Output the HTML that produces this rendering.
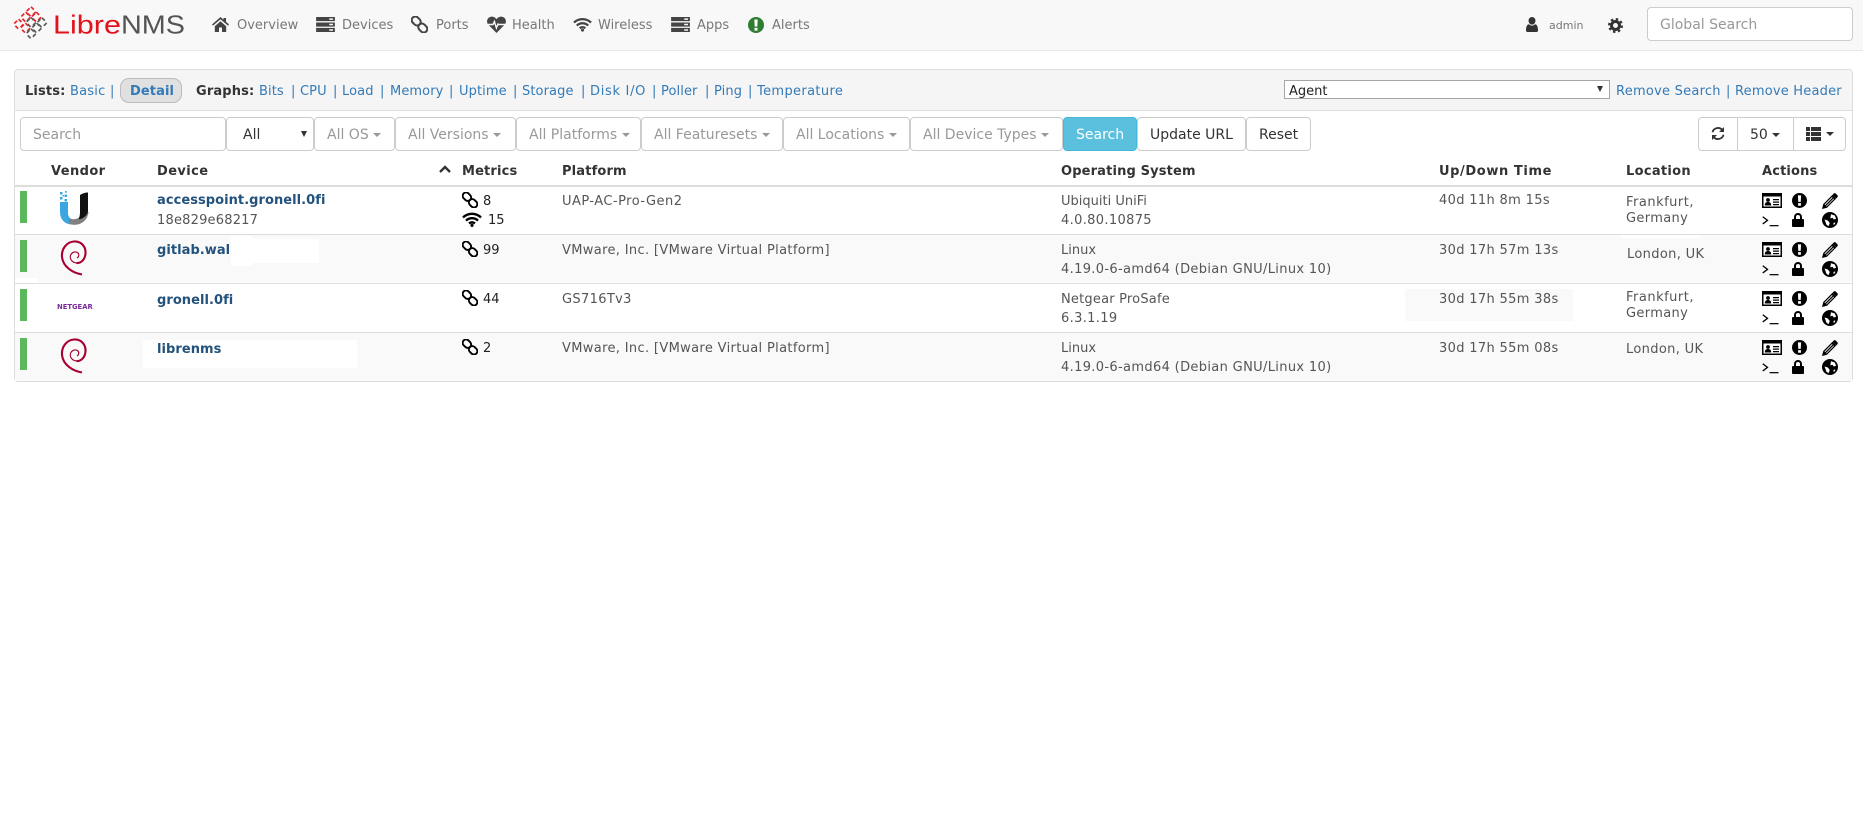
<!DOCTYPE html>
<html lang="en"><head><meta charset="utf-8"><title>LibreNMS Devices</title>
<style>
html,body{margin:0;padding:0;background:#fff}
body{width:1863px;height:821px;position:relative;overflow:hidden;font-family:"DejaVu Sans","Liberation Sans",sans-serif;font-size:13px;color:#333}
.a{position:absolute;white-space:nowrap;line-height:20px;height:20px}
.b{position:absolute;box-sizing:border-box}
a,.l{color:#337ab7;text-decoration:none;letter-spacing:.1px}
.n{color:#777;font-size:13px}
.th{font-weight:bold;color:#333;font-size:13px;letter-spacing:.15px}
.td{color:#555;font-size:13px;letter-spacing:.34px}
.dv{color:#23527c;font-weight:bold;font-size:13px;letter-spacing:.05px}
.btn{position:absolute;box-sizing:border-box;top:117px;height:34px;border:1px solid #ccc;border-radius:4px;background:#fff;line-height:35px;font-size:14px;color:#999;padding-left:12px;white-space:nowrap;overflow:hidden}
.btn i{display:inline-block;width:0;height:0;border-top:4px solid #999;border-left:4px solid transparent;border-right:4px solid transparent;vertical-align:middle;margin-left:0}
.dk{color:#333}.dk i{border-top-color:#333}
svg{position:absolute;overflow:visible}
.bar{position:absolute;left:20px;width:7px;height:32px;background:#5cb85c}
</style></head><body>
<svg width="0" height="0" style="position:absolute"><defs>
<symbol id="link" viewBox="0 0 16 16"><g fill="none" stroke="currentColor" stroke-width="1.900"><rect x="0.300" y="1.300" width="9.200" height="6.800" rx="3.400" transform="rotate(45 4.900 4.700)"/><rect x="6.500" y="7.900" width="9.200" height="6.800" rx="3.400" transform="rotate(45 11.100 11.300)"/></g></symbol>
<symbol id="wifi" viewBox="0 0 20 15"><g fill="none" stroke="currentColor" stroke-width="2.400"><path d="M1 5.500C6 .6 14 .6 19 5.500"/><path d="M4 8.600C7.400 5.400 12.600 5.400 16 8.600"/><path d="M7 11.400C8.800 10 11.200 10 13 11.400"/></g><circle cx="10" cy="13.400" r="1.600" fill="currentColor"/></symbol>
<symbol id="srv" viewBox="0 0 20 16"><path fill="currentColor" d="M0 0h20v4.400H0zM0 5.800h20v4.400H0zM0 11.600h20V16H0z"/><path fill="#f8f8f8" d="M14 1.400h4v1.600h-4zM14 7.200h4v1.600h-4zM14 13h4v1.600h-4z"/></symbol>
<symbol id="excl" viewBox="0 0 16 16"><circle cx="8" cy="8" r="8" fill="currentColor"/><path fill="#fff" d="M6.300 2.500h3.400l-.4 7H6.700zM6.500 10.800h3v2.800h-3z"/></symbol>
<symbol id="card" viewBox="0 0 20 15"><path fill="#000" d="M0 0h20v15H0z"/><path fill="#fff" d="M1.500 3.500h17v10h-17z"/><circle cx="6" cy="7" r="1.900" fill="#000"/><path fill="#000" d="M2.800 12.500c0-2.500 1-3.500 3.200-3.500s3.200 1 3.200 3.500zM11 6h6v1.300h-6zM11 8.500h6v1.300h-6zM11 11h6v1.300h-6z"/></symbol>
<symbol id="pen" viewBox="0 0 16 16"><path fill="#000" d="M0 16l1.300-5L10.500 1.800l3.700 3.700L5 14.700zM11.500.8c.8-.8 1.700-.8 2.400-.1l1.400 1.400c.7.7.7 1.600-.1 2.400l-.9.9-3.700-3.700z"/><path fill="#fff" d="M2.500 11.500l7.500-7.500.6.6-7.500 7.500zM4 13l7.500-7.500.5.5-7.500 7.500z"/></symbol>
<symbol id="lock" viewBox="0 0 12 14"><path fill="none" stroke="#000" stroke-width="2" d="M3 6.500V4a3 3 0 0 1 6 0v2.500"/><rect x="0" y="6" width="12" height="8" rx="1" fill="#000"/></symbol>
<symbol id="globe" viewBox="0 0 16 16"><circle cx="8" cy="8" r="8" fill="#000"/><path fill="#fff" d="M9 2.200l3.800 1.300 1.300 3.300-2.300.7-1.300-1.700-2.200.6zM2.500 7.500l3.300 1 2 2.500-1.300 3.300-2.200-1.800-.8-2.500zM12 10.500l1.500.4-1.400 2-.9-.8z"/></symbol>
<symbol id="term" viewBox="0 0 18 12"><path fill="none" stroke="#000" stroke-width="1.400" d="M.8 1.500l5 3.800-5 3.800"/><path fill="#000" d="M8 10.300h9.500v1.300H8z"/></symbol>
<symbol id="deb" viewBox="0 0 28 36"><g fill="none" stroke="#a80030"><path stroke-width="2.100" d="M22 34.500C13 33 3 27 2 17 1.300 9 6.500 2 14 1.500 21.500 1 26 7 25.500 13.500 25 19.500 21 23.500 16.500 23"/><path stroke-width="1.100" d="M16.500 23C12 22.500 9.500 19 10.500 15.500 11.500 12.500 15 11 17.500 12.500 19.500 14 19 17 17 18"/></g></symbol>
</defs></svg>

<!-- navbar -->
<div class="b" style="left:0;top:0;width:1863px;height:51px;background:#f8f8f8;border-bottom:1px solid #e7e7e7"></div>

<!-- logo -->
<svg style="left:14px;top:8px" width="34" height="33" viewBox="0 0 34 33">
<g transform="rotate(45 17 16.500)" fill="none" stroke-width="1.700">
<g stroke="#e6242c" stroke-dasharray="4 3.300"><rect x="4.500" y="4" width="7" height="7"/><rect x="12" y="4" width="7" height="7"/><rect x="4.500" y="11.500" width="7" height="7"/><rect x="4.500" y="21.500" width="7" height="7"/></g>
<g stroke="#5a5a5a" stroke-dasharray="4 3.300"><rect x="20" y="11.500" width="7" height="7"/><rect x="12" y="11.500" width="7" height="7"/><rect x="20" y="4" width="7" height="7"/></g>
<g stroke="#e6242c" stroke-dasharray="4 3.300"><rect x="12" y="19.500" width="7" height="7"/></g>
<g stroke="#5a5a5a" stroke-dasharray="4 3.300"><rect x="20" y="19.500" width="7" height="7"/></g>
</g></svg>
<svg style="left:53px;top:8px" width="134" height="34"><text x="0" y="25.500" font-family="Liberation Sans" font-size="26" fill="#e2131c" textLength="68" lengthAdjust="spacingAndGlyphs">Libre</text><text x="68" y="25.500" font-family="Liberation Sans" font-size="26" fill="#555" textLength="64" lengthAdjust="spacingAndGlyphs">NMS</text></svg>

<!-- nav -->
<svg style="left:212px;top:17px;color:#444" width="17" height="15" viewBox="0 0 17 15"><path fill="currentColor" d="M8.500 0l3 2.600V1h2.500v3.800L17 7.500l-1 1.100-7.500-6.400L1 8.600 0 7.500zM2.800 9.200l5.700-4.900 5.700 4.900V15H10v-4.500H7V15H2.800z"/></svg>
<div class="a n" style="left:237px;top:16px">Overview</div>
<svg style="left:316px;top:17px;color:#444" width="19" height="15"><use href="#srv"/></svg>
<div class="a n" style="left:342px;top:16px">Devices</div>
<svg style="left:411px;top:16px;color:#444" width="17" height="17"><use href="#link"/></svg>
<div class="a n" style="left:436px;top:16px">Ports</div>
<svg style="left:487px;top:16px;color:#444" width="19" height="17" viewBox="0 0 19 17"><path fill="#444" d="M9.500 17L1 8.400C-1 5.500.2 1 4.500.6c2-.2 4 1 5 2.600C10.500 1.600 12.500.4 14.500.6 18.800 1 20 5.500 18 8.400z"/><path fill="none" stroke="#f8f8f8" stroke-width="1.400" d="M0 8.500h6l1.400-3 2 6.500 1.600-4 .8.500H19"/></svg>
<div class="a n" style="left:512px;top:16px">Health</div>
<svg style="left:573px;top:17px;color:#444" width="19" height="15"><use href="#wifi"/></svg>
<div class="a n" style="left:598px;top:16px">Wireless</div>
<svg style="left:671px;top:17px;color:#444" width="19" height="15"><use href="#srv"/></svg>
<div class="a n" style="left:697px;top:16px">Apps</div>
<svg style="left:748px;top:17px;color:#2e7d32" width="16" height="16"><use href="#excl"/></svg>
<div class="a n" style="left:772px;top:16px">Alerts</div>

<svg style="left:1526px;top:17px" width="12" height="15" viewBox="0 0 12 15"><ellipse cx="6" cy="3.800" rx="3.500" ry="3.800" fill="#333"/><path fill="#333" d="M0 13.500C0 9.500 1.200 7.300 3 7.300c1 .9 2 1.300 3 1.300s2-.4 3-1.300c1.800 0 3 2.200 3 6.200 0 1-.7 1.500-1.500 1.500h-9C.7 15 0 14.500 0 13.500z"/></svg>
<div class="a n" style="left:1549px;top:16px;font-size:11px">admin</div>
<svg style="left:1608px;top:18px" width="15" height="15" viewBox="0 0 15 15"><circle cx="7.500" cy="7.500" r="4" fill="none" stroke="#333" stroke-width="3"/><circle cx="7.500" cy="7.500" r="6.400" fill="none" stroke="#333" stroke-width="2.200" stroke-dasharray="2.500 2.530"/></svg>
<div class="b" style="left:1647px;top:7px;width:206px;height:34px;background:#fff;border:1px solid #ccc;border-radius:4px"></div>
<div class="a" style="left:1660px;top:15px;font-size:14px;color:#999">Global Search</div>

<!-- panel -->
<div class="b" style="left:14px;top:69px;width:1839px;height:313px;border:1px solid #ddd;border-radius:4px;background:#fff"></div>
<div class="b" style="left:15px;top:70px;width:1837px;height:41px;background:#f5f5f5;border-bottom:1px solid #ddd;border-radius:3px 3px 0 0"></div>

<div class="a th" style="left:25px;top:82px">Lists:</div>
<a class="a" style="left:70px;top:82px;letter-spacing:.2px">Basic</a><div class="a" style="left:110px;top:82px;color:#337ab7">|</div>
<div class="b" style="left:120px;top:78px;width:62px;height:25px;background:#e0e0e0;border:1px solid #bbb;border-radius:9px"></div>
<a class="a" style="left:130px;top:82px;font-weight:bold">Detail</a>
<div class="a th" style="left:196px;top:82px">Graphs:</div>
<a class="a" style="left:259px;top:82px">Bits</a><div class="a" style="left:291px;top:82px;color:#337ab7">|</div>
<a class="a" style="left:300px;top:82px">CPU</a><div class="a" style="left:333px;top:82px;color:#337ab7">|</div>
<a class="a" style="left:342px;top:82px">Load</a><div class="a" style="left:380px;top:82px;color:#337ab7">|</div>
<a class="a" style="left:390px;top:82px">Memory</a><div class="a" style="left:449px;top:82px;color:#337ab7">|</div>
<a class="a" style="left:459px;top:82px">Uptime</a><div class="a" style="left:513px;top:82px;color:#337ab7">|</div>
<a class="a" style="left:522px;top:82px">Storage</a><div class="a" style="left:581px;top:82px;color:#337ab7">|</div>
<a class="a" style="left:590px;top:82px;letter-spacing:.7px">Disk I/O</a><div class="a" style="left:652px;top:82px;color:#337ab7">|</div>
<a class="a" style="left:661px;top:82px">Poller</a><div class="a" style="left:705px;top:82px;color:#337ab7">|</div>
<a class="a" style="left:714px;top:82px">Ping</a><div class="a" style="left:748px;top:82px;color:#337ab7">|</div>
<a class="a" style="left:757px;top:82px;letter-spacing:.35px">Temperature</a>

<div class="b" style="left:1284px;top:80px;width:326px;height:19px;background:#fff;border:1px solid #a6a6a6"></div>
<div class="a" style="left:1289px;top:82px;color:#222">Agent</div>
<div class="b" style="left:1597px;top:86px;width:0;height:0;border-top:6px solid #333;border-left:3px solid transparent;border-right:3px solid transparent"></div>
<a class="a" style="left:1616px;top:82px;letter-spacing:.25px">Remove Search</a><div class="a" style="left:1726px;top:82px;color:#337ab7">|</div>
<a class="a" style="left:1735px;top:82px;letter-spacing:.2px">Remove Header</a>

<!-- search row -->
<div class="btn" style="left:20px;width:206px;color:#999;line-height:35px;padding-left:12px">Search</div>
<div class="btn dk" style="left:226px;width:88px;color:#333;line-height:35px;padding-left:16px">All</div>
<div class="b" style="left:301px;top:131px;width:0;height:0;border-top:6px solid #333;border-left:3px solid transparent;border-right:3px solid transparent"></div>
<div class="btn" style="left:314px;width:81px">All OS <i></i></div>
<div class="btn" style="left:395px;width:121px">All Versions <i></i></div>
<div class="btn" style="left:516px;width:125px">All Platforms <i></i></div>
<div class="btn" style="left:641px;width:142px">All Featuresets <i></i></div>
<div class="btn" style="left:783px;width:127px">All Locations <i></i></div>
<div class="btn" style="left:910px;width:153px">All Device Types <i></i></div>
<div class="btn" style="left:1063px;width:74px;background:#5bc0de;border-color:#46b8da;color:#fff">Search</div>
<div class="btn dk" style="left:1137px;width:109px">Update URL</div>
<div class="btn dk" style="left:1246px;width:65px">Reset</div>

<div class="btn" style="left:1698px;width:40px;border-radius:4px 0 0 4px"></div>
<svg style="left:1711px;top:126px" width="14" height="15" viewBox="0 0 14 15"><g fill="none" stroke="#333" stroke-width="1.800"><path d="M1.500 6.200A5.700 5.700 0 0 1 11.400 4"/><path d="M12.500 8.800A5.700 5.700 0 0 1 2.600 11"/></g><path fill="#333" d="M13 1v5H8zM1 14V9h5z"/></svg>
<div class="btn dk" style="left:1737px;width:57px;border-radius:0">50 <i></i></div>
<div class="btn dk" style="left:1793px;width:53px;border-radius:0 4px 4px 0"></div>
<svg style="left:1806px;top:127px" width="15" height="14" viewBox="0 0 15 14"><path fill="#333" d="M0 0h4v4H0zM5 0h10v4H5zM0 5h4v4H0zM5 5h10v4H5zM0 10h4v4H0zM5 10h10v4H5z"/></svg>
<div class="b" style="left:1826px;top:132px;width:0;height:0;border-top:4px solid #333;border-left:4px solid transparent;border-right:4px solid transparent"></div>

<!-- table head -->
<div class="a th" style="left:51px;top:162px;letter-spacing:.4px">Vendor</div>
<div class="a th" style="left:157px;top:162px;letter-spacing:.4px">Device</div>
<svg style="left:439px;top:165px" width="12" height="8" viewBox="0 0 12 8"><path fill="none" stroke="#333" stroke-width="2.400" d="M1 7l5-5 5 5"/></svg>
<div class="a th" style="left:462px;top:162px">Metrics</div>
<div class="a th" style="left:562px;top:162px">Platform</div>
<div class="a th" style="left:1061px;top:162px">Operating System</div>
<div class="a th" style="left:1439px;top:162px;letter-spacing:.6px">Up/Down Time</div>
<div class="a th" style="left:1626px;top:162px;letter-spacing:.3px">Location</div>
<div class="a th" style="left:1762px;top:162px">Actions</div>

<!-- rows -->
<div class="b" style="left:15px;top:185px;width:1837px;height:2px;background:#ddd"></div>
<div class="b" style="left:15px;top:235px;width:1837px;height:47px;background:#f9f9f9"></div>
<div class="b" style="left:15px;top:234px;width:1837px;height:1px;background:#ddd"></div>
<div class="b" style="left:15px;top:283px;width:1837px;height:1px;background:#ddd"></div>
<div class="b" style="left:15px;top:333px;width:1837px;height:48px;background:#f9f9f9"></div>
<div class="b" style="left:15px;top:332px;width:1837px;height:1px;background:#ddd"></div>

<!-- patches -->
<div class="b" style="left:231px;top:239px;width:88px;height:24px;background:#fff"></div>
<div class="b" style="left:231px;top:236px;width:21px;height:30px;background:#fff"></div>
<div class="b" style="left:15px;top:278px;width:23px;height:50px;background:#fff"></div>
<div class="b" style="left:143px;top:340px;width:214px;height:28px;background:#fff"></div>
<div class="b" style="left:1621px;top:235px;width:79px;height:3px;background:#fff"></div>
<div class="b" style="left:1405px;top:289px;width:168px;height:32px;background:#f9f9f9"></div>
<div class="b" style="left:15px;top:283px;width:23px;height:1px;background:#ddd"></div>

<div class="bar" style="top:191px"></div><div class="bar" style="top:240px"></div><div class="bar" style="top:289px"></div><div class="bar" style="top:338px"></div>

<!-- vendor logos -->
<svg style="left:58px;top:191px" width="32" height="34" viewBox="0 0 32 34">
<path fill="#3aa7e0" d="M2 11h8v11c0 3 1.500 5 3.500 6-2 1.500-2.500 3.500-1 5.500C6 32.500 2 28 2 21z"/>
<path fill="#808080" d="M11 27.500c3 1 7 1 9.500-.5 2-1 4-3 4.500-6h5.500c-.5 6-4 10-9 12-3 1-6.500 1-8.500.5-2-1-3-3.500-1.500-6z"/>
<path fill="#111" d="M22 4c2-1.500 5-2.500 8-2.500V20c0 2-1.500 4.500-4.500 6.500-2 1.500-3.500 1.700-5 1.700 1-2 1.500-4.500 1.500-7.200z"/>
<path fill="#3aa7e0" d="M2 1h2.500v2.500H2zM6.500 3.500H9V6H6.500zM2 6h2.500v2.500H2zM6.500 8H9v2.500H6.500zM7 0h1.700v1.700H7zM4.500 4h1.500v1.500H4.500z"/>
</svg>
<svg style="left:60px;top:240px" width="28" height="36"><use href="#deb"/></svg>
<div class="a" style="left:57px;top:297px;font-size:6.800px;font-weight:bold;color:#7b2a9a">NETGEAR</div>
<svg style="left:60px;top:338px" width="28" height="36"><use href="#deb"/></svg>

<!-- row 1 -->
<div class="a dv" style="left:157px;top:191px">accesspoint.gronell.0fi</div>
<div class="a td" style="left:157px;top:211px;letter-spacing:.2px">18e829e68217</div>
<svg style="left:462px;top:192px;color:#000" width="16" height="16"><use href="#link"/></svg><div class="a" style="left:483px;top:192px;color:#222">8</div>
<svg style="left:462px;top:212px;color:#000" width="20" height="15"><use href="#wifi"/></svg><div class="a" style="left:488px;top:211px;color:#222">15</div>
<div class="a td" style="left:562px;top:192px;letter-spacing:.47px">UAP-AC-Pro-Gen2</div>
<div class="a td" style="left:1061px;top:192px;letter-spacing:0">Ubiquiti UniFi</div>
<div class="a td" style="left:1061px;top:211px">4.0.80.10875</div>
<div class="a td" style="left:1439px;top:191px">40d 11h 8m 15s</div>
<div class="a td" style="left:1626px;top:193px;letter-spacing:.5px">Frankfurt,</div>
<div class="a td" style="left:1626px;top:209px">Germany</div>

<!-- row 2 -->
<div class="a dv" style="left:157px;top:241px">gitlab.wal</div>
<svg style="left:462px;top:241px;color:#000" width="16" height="16"><use href="#link"/></svg><div class="a" style="left:483px;top:241px;color:#222">99</div>
<div class="a td" style="left:562px;top:241px">VMware, Inc. [VMware Virtual Platform]</div>
<div class="a td" style="left:1061px;top:241px;letter-spacing:0">Linux</div>
<div class="a td" style="left:1061px;top:260px">4.19.0-6-amd64 (Debian GNU/Linux 10)</div>
<div class="a td" style="left:1439px;top:241px">30d 17h 57m 13s</div>
<div class="a td" style="left:1627px;top:245px">London, UK</div>

<!-- row 3 -->
<div class="a dv" style="left:157px;top:291px">gronell.0fi</div>
<svg style="left:462px;top:290px;color:#000" width="16" height="16"><use href="#link"/></svg><div class="a" style="left:483px;top:290px;color:#222">44</div>
<div class="a td" style="left:562px;top:290px">GS716Tv3</div>
<div class="a td" style="left:1061px;top:290px;letter-spacing:.2px">Netgear ProSafe</div>
<div class="a td" style="left:1061px;top:309px">6.3.1.19</div>
<div class="a td" style="left:1439px;top:290px">30d 17h 55m 38s</div>
<div class="a td" style="left:1626px;top:288px;letter-spacing:.5px">Frankfurt,</div>
<div class="a td" style="left:1626px;top:304px">Germany</div>

<!-- row 4 -->
<div class="a dv" style="left:157px;top:340px">librenms</div>
<svg style="left:462px;top:339px;color:#000" width="16" height="16"><use href="#link"/></svg><div class="a" style="left:483px;top:339px;color:#222">2</div>
<div class="a td" style="left:562px;top:339px">VMware, Inc. [VMware Virtual Platform]</div>
<div class="a td" style="left:1061px;top:339px;letter-spacing:0">Linux</div>
<div class="a td" style="left:1061px;top:358px">4.19.0-6-amd64 (Debian GNU/Linux 10)</div>
<div class="a td" style="left:1439px;top:339px">30d 17h 55m 08s</div>
<div class="a td" style="left:1626px;top:340px">London, UK</div>

<!-- actions -->
<svg style="left:1762px;top:193px;color:#000" width="20" height="15"><use href="#card"/></svg><svg style="left:1792px;top:193px;color:#000" width="15" height="15"><use href="#excl"/></svg><svg style="left:1822px;top:193px" width="16" height="16"><use href="#pen"/></svg>
<svg style="left:1762px;top:215px" width="17" height="12"><use href="#term"/></svg><svg style="left:1792px;top:213px" width="12" height="14"><use href="#lock"/></svg><svg style="left:1822px;top:212px" width="16" height="16"><use href="#globe"/></svg>

<svg style="left:1762px;top:242px;color:#000" width="20" height="15"><use href="#card"/></svg><svg style="left:1792px;top:242px;color:#000" width="15" height="15"><use href="#excl"/></svg><svg style="left:1822px;top:242px" width="16" height="16"><use href="#pen"/></svg>
<svg style="left:1762px;top:264px" width="17" height="12"><use href="#term"/></svg><svg style="left:1792px;top:262px" width="12" height="14"><use href="#lock"/></svg><svg style="left:1822px;top:261px" width="16" height="16"><use href="#globe"/></svg>

<svg style="left:1762px;top:291px;color:#000" width="20" height="15"><use href="#card"/></svg><svg style="left:1792px;top:291px;color:#000" width="15" height="15"><use href="#excl"/></svg><svg style="left:1822px;top:291px" width="16" height="16"><use href="#pen"/></svg>
<svg style="left:1762px;top:313px" width="17" height="12"><use href="#term"/></svg><svg style="left:1792px;top:311px" width="12" height="14"><use href="#lock"/></svg><svg style="left:1822px;top:310px" width="16" height="16"><use href="#globe"/></svg>

<svg style="left:1762px;top:340px;color:#000" width="20" height="15"><use href="#card"/></svg><svg style="left:1792px;top:340px;color:#000" width="15" height="15"><use href="#excl"/></svg><svg style="left:1822px;top:340px" width="16" height="16"><use href="#pen"/></svg>
<svg style="left:1762px;top:362px" width="17" height="12"><use href="#term"/></svg><svg style="left:1792px;top:360px" width="12" height="14"><use href="#lock"/></svg><svg style="left:1822px;top:359px" width="16" height="16"><use href="#globe"/></svg>
</body></html>
